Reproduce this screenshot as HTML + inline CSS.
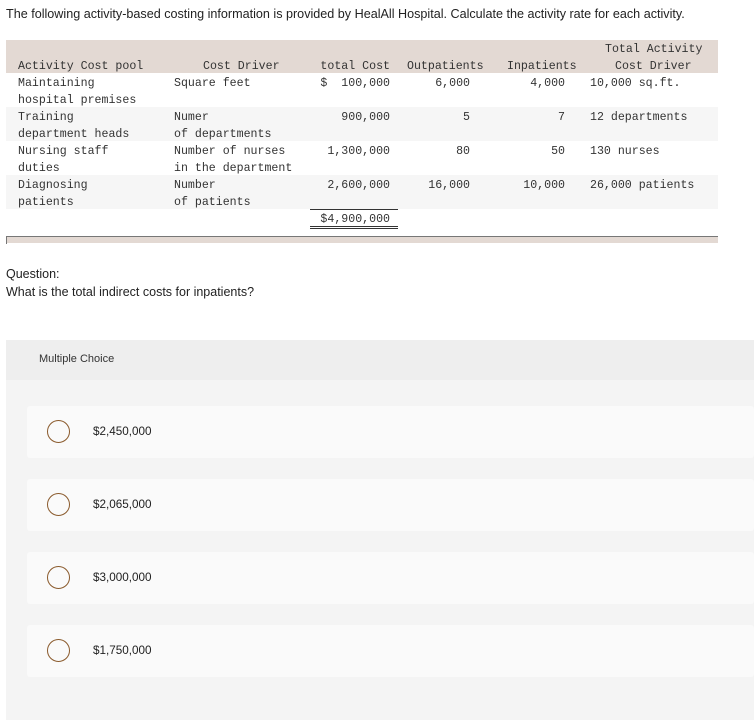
<!DOCTYPE html>
<html><head><meta charset="utf-8"><style>
body{margin:0;width:754px;height:720px;background:#fff;position:relative;overflow:hidden;font-family:"Liberation Sans",Arial,sans-serif;color:#222}
.a{position:absolute;white-space:pre}
.m{font-family:"Liberation Mono",monospace;font-size:11.6px;color:#333;line-height:17px}
.r{text-align:right}
.bg{position:absolute;left:6px;width:712px}
.t{font-size:12.5px;color:#222}
.opt{position:absolute;left:27px;width:727px;height:52px;background:#fafafa;border-radius:3px}
.opt .c{position:absolute;left:20px;top:14px;width:21px;height:21px;border:1.3px solid #8a5a2c;border-radius:50%}
.opt .l{position:absolute;left:66px;top:19px;font-size:11.7px;color:#222}
</style></head><body>
<div class="a" style="left:6px;top:7px;font-size:12.6px;color:#222">The following activity-based costing information is provided by HealAll Hospital. Calculate the activity rate for each activity.</div>

<div class="bg" style="top:40px;height:33px;background:#e3d9d3"></div>
<div class="bg" style="top:107px;height:34px;background:#f6f6f6"></div>
<div class="bg" style="top:175px;height:34px;background:#f6f6f6"></div>
<div class="bg" style="top:236px;height:6px;background:#e3d9d3;border-top:1px solid #777"></div>
<div style="position:absolute;left:6px;top:236px;width:1px;height:8px;background:#777"></div>
<div style="position:absolute;left:310px;top:209px;width:88px;height:1px;background:#333"></div>
<div style="position:absolute;left:310px;top:226px;width:88px;height:1px;background:#333"></div>
<div style="position:absolute;left:310px;top:228px;width:88px;height:1px;background:#333"></div>

<div class="a m" style="left:18px;top:58px">Activity Cost pool
Maintaining
hospital premises
Training
department heads
Nursing staff
duties
Diagnosing
patients</div>
<div class="a m" style="left:203px;top:58px">Cost Driver</div>
<div class="a m" style="left:174px;top:75px">Square feet

Numer
of departments
Number of nurses
in the department
Number
of patients</div>
<div class="a m r" style="left:290px;width:100px;top:58px">total Cost
$  100,000

900,000

1,300,000

2,600,000

$4,900,000</div>
<div class="a m" style="left:407px;top:58px">Outpatients</div>
<div class="a m r" style="left:400px;width:70px;top:75px">6,000

5

80

16,000</div>
<div class="a m" style="left:507px;top:58px">Inpatients</div>
<div class="a m r" style="left:495px;width:70px;top:75px">4,000

7

50

10,000</div>
<div class="a m" style="left:605px;top:41px">Total Activity</div>
<div class="a m" style="left:615px;top:58px">Cost Driver</div>
<div class="a m" style="left:590px;top:75px">10,000 sq.ft.

12 departments

130 nurses

26,000 patients</div>

<div class="a t" style="left:6px;top:265px;line-height:18px">Question:
What is the total indirect costs for inpatients?</div>

<div style="position:absolute;left:6px;top:340px;width:748px;height:380px;background:#f4f4f4"></div>
<div style="position:absolute;left:6px;top:340px;width:748px;height:40px;background:#eeeeee"></div>
<div class="a" style="left:39px;top:353px;font-size:11px;color:#333">Multiple Choice</div>

<div class="opt" style="top:406px"><div class="c"></div><div class="l">$2,450,000</div></div>
<div class="opt" style="top:479px"><div class="c"></div><div class="l">$2,065,000</div></div>
<div class="opt" style="top:552px"><div class="c"></div><div class="l">$3,000,000</div></div>
<div class="opt" style="top:625px"><div class="c"></div><div class="l">$1,750,000</div></div>
</body></html>
